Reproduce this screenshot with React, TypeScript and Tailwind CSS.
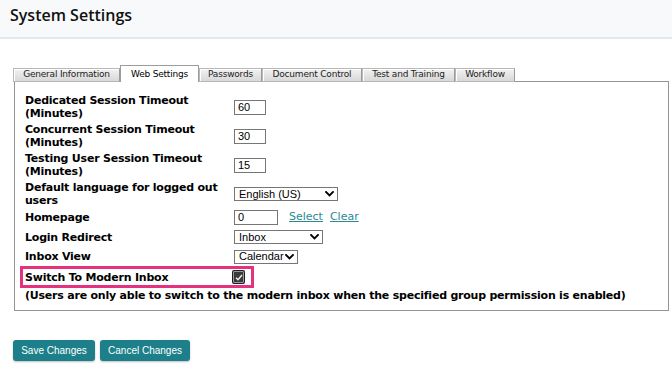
import React from "react";

const Chevron = () => (
  <svg width="9" height="6" viewBox="0 0 9 6" className="shrink-0">
    <path d="M1 1 L4.5 4.5 L8 1" fill="none" stroke="#000" strokeWidth="1.9" strokeLinecap="square" />
  </svg>
);

const TextBox = ({ value, w }: { value: string; w: string }) => (
  <div className={`${w} h-[15px] border border-[#767676] bg-white pl-[3px] flex items-center text-[11px] leading-none text-black font-['Liberation_Sans',sans-serif]`}>
    {value}
  </div>
);

const SelectBox = ({ value, w }: { value: string; w: string }) => (
  <div className={`${w} h-[14px] border border-[#767676] bg-white pl-[4px] pr-[3px] flex items-center justify-between text-[11px] leading-none text-black font-['Liberation_Sans',sans-serif]`}>
    <span>{value}</span>
    <Chevron />
  </div>
);

const Tab = ({ label, w, active }: { label: string; w: string; active?: boolean }) =>
  active ? (
    <div className={`${w} h-[17px] bg-white border border-b-0 border-[#9c9c9c] flex items-center justify-center pt-[1px] text-[9px] text-black`}>
      {label}
    </div>
  ) : (
    <div className={`${w} h-[14px] bg-gradient-to-b from-[#f2f2f2] to-[#d8d8d8] border border-[#b8b8b8] border-r-[#9a9a9a] shadow-[inset_1px_1px_0_#ffffff] flex items-center justify-center text-[9px] text-[#222]`}>
      {label}
    </div>
  );

export default function App() {
  const label = "w-[209px] shrink-0 text-[11px] leading-[13px] font-bold tracking-[-0.22px] text-black font-['DejaVu_Sans',sans-serif] whitespace-nowrap";
  return (
    <div className="w-[672px] h-[375px] bg-white overflow-hidden font-['DejaVu_Sans',sans-serif]">
      <div className="h-[39px] bg-[#f8f9fb] border-b-2 border-[#e4e7eb] pl-[10px] pt-[4px]">
        <h1 className="text-[16px] leading-[22px] font-semibold text-[#111] font-['Open_Sans',sans-serif]">System Settings</h1>
      </div>

      <div className="pl-[13px] pt-[26px]">
        <div className="relative z-10 flex items-end h-[17px] tracking-[-0.2px]">
          <Tab label="General Information" w="w-[107px]" />
          <Tab label="Web Settings" w="w-[79px]" active />
          <Tab label="Passwords" w="w-[63px]" />
          <Tab label="Document Control" w="w-[100px]" />
          <Tab label="Test and Training" w="w-[93px]" />
          <Tab label="Workflow" w="w-[60px]" />
        </div>

        <div className="-mt-[1px] ml-[1px] w-[655px] border border-[#8f9695] pt-[12px] pb-[8px] pl-[10px]">
          <div className="flex items-center h-[26px] mb-[3px]">
            <div className={label}>Dedicated Session Timeout<br />(Minutes)</div>
            <TextBox value="60" w="w-[32px]" />
          </div>
          <div className="flex items-center h-[26px] mb-[3px]">
            <div className={label}>Concurrent Session Timeout<br />(Minutes)</div>
            <TextBox value="30" w="w-[32px]" />
          </div>
          <div className="flex items-center h-[26px] mb-[3px]">
            <div className={label}>Testing User Session Timeout<br />(Minutes)</div>
            <TextBox value="15" w="w-[32px]" />
          </div>
          <div className="flex items-center h-[26px]">
            <div className={label}>Default language for logged out<br />users</div>
            <SelectBox value="English (US)" w="w-[104px]" />
          </div>
          <div className="flex items-center h-[20px]">
            <div className={label}>Homepage</div>
            <TextBox value="0" w="w-[44px]" />
            <a className="ml-[11px] text-[11px] text-[#2a8a96] underline font-['DejaVu_Sans',sans-serif]">Select</a>
            <a className="ml-[7px] text-[11px] text-[#2a8a96] underline font-['DejaVu_Sans',sans-serif]">Clear</a>
          </div>
          <div className="flex items-center h-[20px]">
            <div className={label}>Login Redirect</div>
            <SelectBox value="Inbox" w="w-[89px]" />
          </div>
          <div className="flex items-center h-[19px]">
            <div className={label}>Inbox View</div>
            <SelectBox value="Calendar" w="w-[64px]" />
          </div>
          <div className="-ml-[5px] w-[234px] h-[22px] border-[3px] border-[#e4327f] pl-[2px] flex items-center">
            <div className={label}>Switch To Modern Inbox</div>
            <div className="ml-[-2px] w-[13px] h-[14px] rounded-[2px] bg-[#1e1e1e] p-[1px]">
              <div className="w-full h-full rounded-[1px] border border-[#9a9a9a] bg-[#3a3a3a] flex items-center justify-center">
                <svg width="8" height="7" viewBox="0 0 8 7">
                  <path d="M1 3.8 L3 5.8 L7 1" fill="none" stroke="#f0f0f0" strokeWidth="1.4" />
                </svg>
              </div>
            </div>
          </div>
          <div className="h-[14px] flex items-center">
            <div className={label}>(Users are only able to switch to the modern inbox when the specified group permission is enabled)</div>
          </div>
        </div>

        <div className="mt-[29px] flex gap-[5px]">
          <button className="w-[82px] h-[21px] rounded-[3px] bg-[#1c7f89] text-white text-[10px] font-['Liberation_Sans',sans-serif] shadow-[0_1px_2px_rgba(0,0,0,0.25)]">Save Changes</button>
          <button className="w-[90px] h-[21px] rounded-[3px] bg-[#1c7f89] text-white text-[10px] font-['Liberation_Sans',sans-serif] shadow-[0_1px_2px_rgba(0,0,0,0.25)]">Cancel Changes</button>
        </div>
      </div>
    </div>
  );
}
